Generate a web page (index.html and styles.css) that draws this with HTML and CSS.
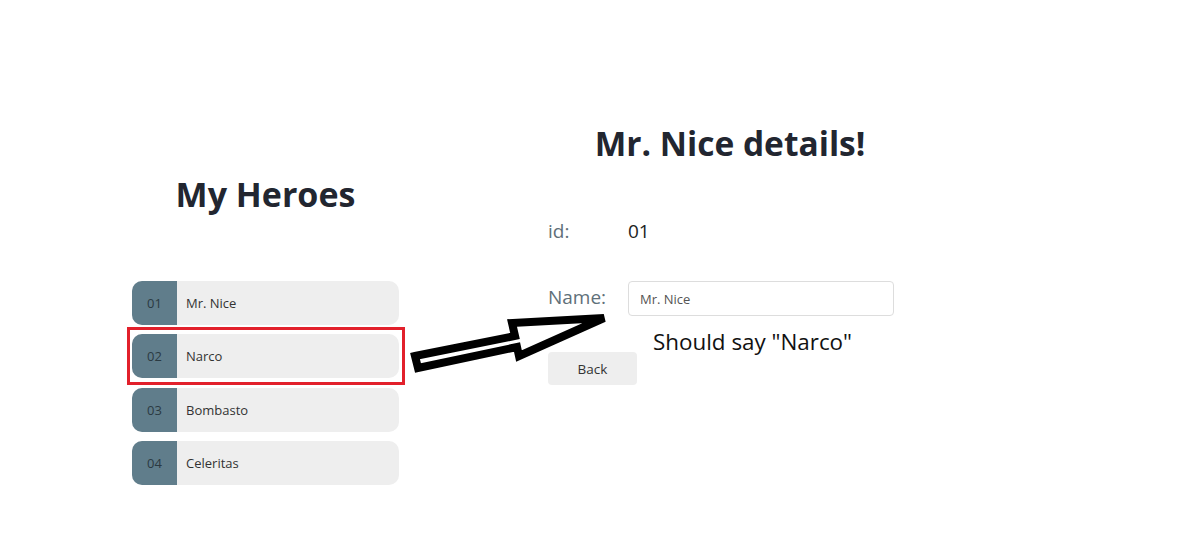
FILE: index.html
```html
<!DOCTYPE html>
<html lang="en">
<head>
  <meta charset="UTF-8" />
  <meta name="viewport" content="width=device-width, initial-scale=1.0" />
  <title>Tour of Heroes</title>
  <link rel="stylesheet" href="styles.css">
</head>
<body>
  <div class="page">
    <section class="heroes">
      <h2>My Heroes</h2>
      <ul class="heroes-list">
        <li><a href="#"><span class="badge">01</span><span class="name">Mr. Nice</span></a></li>
        <li><a href="#"><span class="badge">02</span><span class="name">Narco</span></a></li>
        <li><a href="#"><span class="badge">03</span><span class="name">Bombasto</span></a></li>
        <li><a href="#"><span class="badge">04</span><span class="name">Celeritas</span></a></li>
      </ul>
    </section>

    <section class="detail">
      <h2>Mr. Nice details!</h2>
      <div class="row row-id"><span class="label">id:</span><span class="value">01</span></div>
      <div class="row row-name">
        <label for="hero-name" class="label">Name:</label>
        <input id="hero-name" value="Mr. Nice" />
      </div>
      <button type="button">Back</button>
    </section>
  </div>

  <!-- annotation drawn on top of the screenshot -->
  <div class="mark-box"></div>
  <svg class="mark-arrow" width="1200" height="559" viewBox="0 0 1200 559">
    <polygon points="415,356 515,336 512,323 604,318 519,356 517,347 418,368" fill="#fff" stroke="#000" stroke-width="8" stroke-linejoin="miter" />
  </svg>
  <div class="mark-note">Should say "Narco"</div>
</body>
</html>
```

FILE: styles.css
```css
body { margin: 0; font-family: "Open Sans", "Noto Sans", Arial, sans-serif; color: #333; background: #fff; }
.page { display: flex; align-items: flex-start; padding-left: 132px; gap: 149px; }

h2 { margin: 0; font-size: 34px; line-height: 44px; font-weight: 700; color: #222630; text-align: center; }

.heroes { width: 267px; padding-top: 172px; }
.heroes h2 { margin-bottom: 65px; }
.heroes-list { list-style: none; margin: 0; padding: 0; display: flex; flex-direction: column; gap: 9.33px; }
.heroes-list a { display: flex; height: 44px; align-items: center; background: #eee; border-radius: 10px; color: #333; text-decoration: none; font-size: 13px; }
.badge { display: flex; align-items: center; justify-content: center; width: 45px; height: 100%; background: #607d8b; color: #2b3a42; border-radius: 10px 0 0 10px; }
.name { padding-left: 9px; }

.detail { width: 364px; padding-top: 121px; }
.detail h2 { font-size: 33.5px; }
.row { display: flex; align-items: center; }
.label { width: 80px; font-size: 19px; color: #5f7079; }
.row-id { margin-top: 51px; height: 30px; }
.row-id .value { font-size: 19px; color: #222; }
.row-name { margin-top: 35px; }
.row-name .label { position: relative; top: -2px; }
.row-name input { width: 266px; height: 35px; box-sizing: border-box; border: 1px solid #ddd; border-radius: 4px; padding: 0 11px; font-family: inherit; font-size: 13px; color: #555; }

button { margin-top: 36px; width: 89px; height: 33px; border: none; border-radius: 4px; background: #eee; font-family: inherit; font-size: 13.5px; color: #333; cursor: pointer; }

.mark-box { position: absolute; left: 127px; top: 327px; width: 272px; height: 52px; border: 3px solid #e2202b; }
.mark-arrow { position: absolute; left: 0; top: 0; }
.mark-note { position: absolute; left: 653px; top: 326px; font-size: 22.4px; color: #111; }
```
